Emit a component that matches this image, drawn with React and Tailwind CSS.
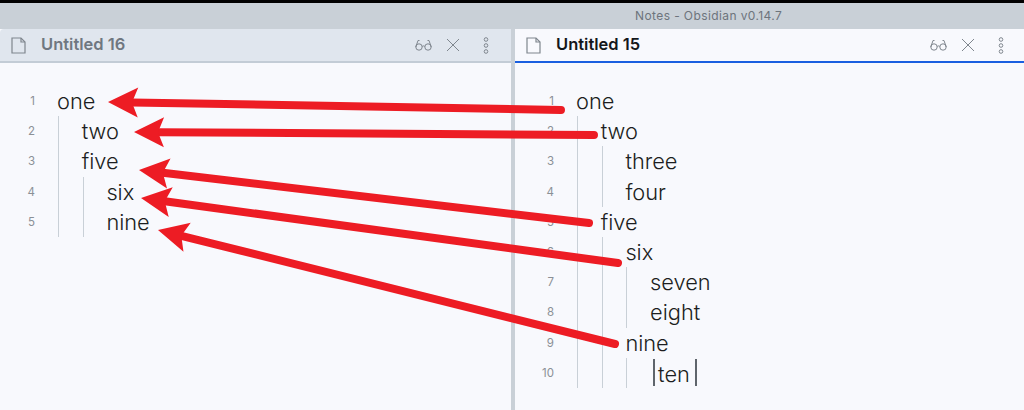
import React from 'react';

const leftLines = [
    { text: 'one', depth: 0 },
    { text: 'two', depth: 1 },
    { text: 'five', depth: 1 },
    { text: 'six', depth: 2 },
    { text: 'nine', depth: 2 },
];

const rightLines = [
    { text: 'one', depth: 0 },
    { text: 'two', depth: 1 },
    { text: 'three', depth: 2 },
    { text: 'four', depth: 2 },
    { text: 'five', depth: 1 },
    { text: 'six', depth: 2 },
    { text: 'seven', depth: 3 },
    { text: 'eight', depth: 3 },
    { text: 'nine', depth: 2 },
    { text: 'ten', depth: 3, cursor: true },
];

// red arrows drawn over both panes: [tailX, tailY, tipX, tipY]
const arrows = [
    [561, 110, 108, 102],
    [594, 135, 134, 132],
    [589, 223, 139, 170],
    [618, 263, 141, 198],
    [615, 344, 158, 230],
];

function FileIcon() {
    return (
        <svg width="15" height="17" viewBox="0 0 15 17" fill="none" stroke="#7f868e" strokeWidth="1.2">
            <path d="M1 1h9l4 4v11H1z" />
            <path d="M10 1v4h4" />
        </svg>
    );
}

function GlassesIcon() {
    return (
        <svg width="17" height="12" viewBox="0 0 17 12" fill="none" stroke="#7f868e" strokeWidth="1">
            <circle cx="4" cy="8" r="3.2" />
            <circle cx="13" cy="8" r="3.2" />
            <path d="M7.2 7.5c.8-.8 1.8-.8 2.6 0M.8 8 3 1.5h1.5M16.2 8 14 1.5h-1.5" />
        </svg>
    );
}

function CloseIcon() {
    return (
        <svg width="14" height="14" viewBox="0 0 14 14" fill="none" stroke="#7f868e" strokeWidth="1">
            <path d="M1 1l12 12M13 1 1 13" />
        </svg>
    );
}

function MoreIcon() {
    return (
        <svg width="6" height="17" viewBox="0 0 6 17" fill="none" stroke="#7f868e" strokeWidth="1">
            <circle cx="3" cy="2.5" r="1.8" />
            <circle cx="3" cy="8.5" r="1.8" />
            <circle cx="3" cy="14.5" r="1.8" />
        </svg>
    );
}

function Pane({ title, lines, active }) {
    return (
        <div className="flex-1 min-w-0 h-full bg-[#f8f9fd]">
            <div className={`h-[34px] flex items-center border-b-2 ${active ? 'bg-[#f8f9fd] border-[#1a5fe0] pr-[20px]' : 'bg-[#e0e6ee] border-[#c3ccd6] rounded-tl-sm pr-[22px]'}`}>
                <div className="ml-[11px] flex items-center"><FileIcon /></div>
                <span className={`ml-[15px] mb-[2px] text-[16.5px] font-semibold ${active ? 'text-[#14171a]' : 'text-[#6f7780]'}`}>{title}</span>
                <div className="ml-auto flex items-center">
                    <GlassesIcon />
                    <div className="ml-[14px] flex"><CloseIcon /></div>
                    <div className="ml-[23px] flex"><MoreIcon /></div>
                </div>
            </div>
            <div className="pt-[23px]">
                {lines.map((line, i) => (
                    <div key={i} className="flex h-[30.2px] items-stretch">
                        <span className={`shrink-0 text-right text-[11.5px] leading-[30px] text-[#8b9096] ${active ? 'w-[39px]' : 'w-[35px]'}`}>{i + 1}</span>
                        <div className="ml-[23px] flex">
                            {Array.from({ length: line.depth }).map((_, d) => (
                                <div key={d} className="w-[24.7px] border-l border-[#c9d0d7]" />
                            ))}
                        </div>
                        <span className={`-ml-[1px] text-[21.8px] font-[350] leading-[30px] text-[#1c1e21] ${line.cursor ? 'border-x-2 border-[#5f656c] h-[27px] mt-[1px] ml-[2px] pl-[3px] pr-[5px] leading-[28px]' : ''}`}>{line.text}</span>
                    </div>
                ))}
            </div>
        </div>
    );
}

export default function App() {
    return (
        <div className="relative w-[1024px] h-[410px] overflow-hidden flex flex-col bg-[#f8f9fd] font-['Inter',sans-serif]">
            <div className="h-[3px] bg-black" />
            <div className="h-[26px] bg-[#c9d0d7] flex items-center pl-[635px] text-[12px] tracking-[0.4px] text-[#6d747c]">
                Notes - Obsidian v0.14.7
            </div>
            <div className="flex-1 flex min-h-0">
                <div className="w-[511px] h-full flex"><Pane title="Untitled 16" lines={leftLines} /></div>
                <div className="w-[4px] bg-[#c9d0d7]" />
                <div className="flex-1 h-full flex"><Pane title="Untitled 15" lines={rightLines} active /></div>
            </div>
            <svg className="absolute inset-0 pointer-events-none" width="1024" height="410" viewBox="0 0 1024 410">
                {arrows.map(([x1, y1, x2, y2], i) => {
                    const len = Math.hypot(x1 - x2, y1 - y2);
                    const ux = (x1 - x2) / len;
                    const uy = (y1 - y2) / len;
                    const bx = x2 + ux * 30;
                    const by = y2 + uy * 30;
                    const nx = -uy * 15;
                    const ny = ux * 15;
                    return (
                        <g key={i}>
                            <line x1={x1} y1={y1} x2={x2 + ux * 24} y2={y2 + uy * 24} stroke="#ed1c24" strokeWidth="8" strokeLinecap="round" />
                            <polygon points={`${x2},${y2} ${bx + nx},${by + ny} ${x2 + ux * 24},${y2 + uy * 24} ${bx - nx},${by - ny}`} fill="#ed1c24" />
                        </g>
                    );
                })}
            </svg>
        </div>
    );
}
